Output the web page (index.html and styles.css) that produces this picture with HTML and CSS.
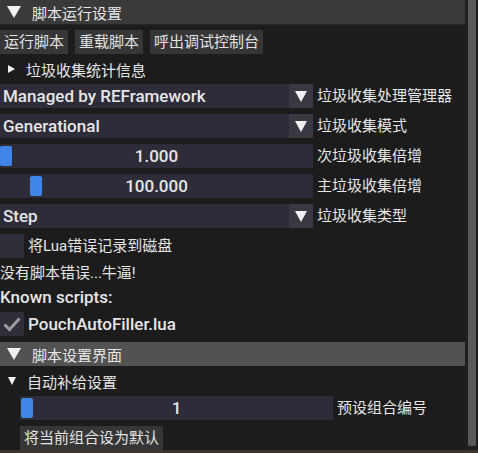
FILE: index.html
```html
<!DOCTYPE html>
<html lang="zh-CN">
<head>
<meta charset="utf-8">
<title>REFramework</title>
<link rel="stylesheet" href="styles.css">
</head>
<body>
<div class="app">
  <div class="window">
    <div class="header"><span class="tri-down big"></span><span>脚本运行设置</span></div>
    <div class="btnrow">
      <div class="btn">运行脚本</div>
      <div class="btn">重载脚本</div>
      <div class="btn">呼出调试控制台</div>
    </div>
    <div class="tree"><span class="tri-right"></span><span>垃圾收集统计信息</span></div>
    <div class="row">
      <div class="combo"><span class="val">Managed by REFramework</span><span class="arrow"><span class="tri-down"></span></span></div>
      <span class="label">垃圾收集处理管理器</span>
    </div>
    <div class="row">
      <div class="combo"><span class="val">Generational</span><span class="arrow"><span class="tri-down"></span></span></div>
      <span class="label">垃圾收集模式</span>
    </div>
    <div class="row">
      <div class="slider"><span class="grab" style="left: 0px"></span><span class="sval">1.000</span></div>
      <span class="label">次垃圾收集倍增</span>
    </div>
    <div class="row">
      <div class="slider"><span class="grab" style="left: 30px"></span><span class="sval">100.000</span></div>
      <span class="label">主垃圾收集倍增</span>
    </div>
    <div class="row">
      <div class="combo"><span class="val">Step</span><span class="arrow"><span class="tri-down"></span></span></div>
      <span class="label">垃圾收集类型</span>
    </div>
    <div class="row">
      <div class="check"></div>
      <span class="label">将Lua错误记录到磁盘</span>
    </div>
    <div class="text">没有脚本错误...牛逼!</div>
    <div class="text latin">Known scripts:</div>
    <div class="row">
      <div class="check">
        <svg width="24" height="24" viewBox="0 0 24 24"><path d="M4.5 12.5 L9.5 17.5 L19.5 6.5" fill="none" stroke="#9b9b9b" stroke-width="3" stroke-linejoin="miter"/></svg>
      </div>
      <span class="label latin">PouchAutoFiller.lua</span>
    </div>
    <div class="header hover"><span class="tri-down big"></span><span>脚本设置界面</span></div>
    <div class="tree"><span class="tri-down small"></span><span>自动补给设置</span></div>
    <div class="row indent">
      <div class="slider"><span class="grab" style="left: 1px"></span><span class="sval">1</span></div>
      <span class="label">预设组合编号</span>
    </div>
    <div class="row indent">
      <div class="btn">将当前组合设为默认</div>
    </div>
  </div>
  <div class="scrollbar"><div class="thumb"></div></div>
</div>
<div class="bottom-edge"></div>
</body>
</html>
```

FILE: styles.css
```css
html, body {
  margin: 0;
  padding: 0;
  background: #1c1c1c;
  width: 478px;
  height: 453px;
  overflow: hidden;
}

body {
  font-family: "Roboto", "Noto Sans CJK SC", sans-serif;
  font-size: 15px;
  color: #e6e6e6;
  position: relative;
}

.app {
  display: flex;
  height: 450px;
}

.window {
  width: 465px;
  display: flex;
  flex-direction: column;
  gap: 6px;
}

.header {
  background: #3a3a3a;
  display: flex;
  align-items: center;
  gap: 11px;
  padding-left: 7px;
  border-bottom: 1px solid #262626;
  box-sizing: border-box;
  height: 25px;
  margin-bottom: -1px;
}

.header.hover {
  background: #525252;
  border-bottom: none;
  margin-bottom: 0;
  height: 24px;
}

.tri-down {
  width: 0;
  height: 0;
  border-left: 6px solid transparent;
  border-right: 6px solid transparent;
  border-top: 11px solid #f2f2f2;
}

.tri-down.big {
  border-left-width: 7px;
  border-right-width: 7px;
  border-top-width: 12px;
}

.tri-down.small {
  border-left-width: 4px;
  border-right-width: 4px;
  border-top-width: 8px;
}

.tri-right {
  width: 0;
  height: 0;
  border-top: 4px solid transparent;
  border-bottom: 4px solid transparent;
  border-left: 7px solid #f2f2f2;
}

.btnrow {
  display: flex;
  gap: 7px;
  height: 24px;
}

.btn {
  height: 24px;
  line-height: 24px;
  padding: 0 4px;
  background: #363636;
  color: #e2e2e2;
  white-space: nowrap;
}

.tree {
  height: 18px;
  display: flex;
  align-items: center;
  gap: 11px;
  padding-left: 8px;
}

.row {
  height: 24px;
  display: flex;
  align-items: center;
  gap: 4px;
}

.row.indent {
  padding-left: 20px;
}

.combo {
  width: 313px;
  height: 24px;
  display: flex;
  background: #2e2c38;
  flex-shrink: 0;
}

.combo .val {
  flex: 1;
  padding-left: 3px;
  line-height: 24px;
  font-weight: 500;
  font-size: 17px;
}

.combo .arrow {
  width: 24px;
  height: 24px;
  background: #3a3941;
  display: flex;
  align-items: center;
  justify-content: center;
}

.label {
  white-space: nowrap;
  line-height: 24px;
}

.slider {
  position: relative;
  width: 313px;
  height: 24px;
  background: #2e2c38;
  flex-shrink: 0;
  display: flex;
  justify-content: center;
  align-items: center;
}

.slider .grab {
  position: absolute;
  top: 2px;
  bottom: 2px;
  width: 12px;
  background: #3f86e8;
  border-radius: 2px;
}

.slider .sval {
  position: relative;
  font-weight: 500;
  font-size: 17px;
}

.check {
  width: 24px;
  height: 24px;
  background: #302f39;
  flex-shrink: 0;
}

.check svg {
  display: block;
}

.text {
  height: 18px;
  line-height: 18px;
  white-space: nowrap;
}

.latin {
  font-weight: 500;
  font-size: 17px;
}

.scrollbar {
  width: 13px;
  height: 450px;
  background: #1f1f1f;
  display: flex;
  padding-left: 3px;
  box-sizing: border-box;
}

.thumb {
  width: 8px;
  height: 446px;
  background: #5a5a5a;
  border-radius: 0 0 2px 2px;
}

.bottom-edge {
  height: 3px;
  background: #3a342c;
}
```
